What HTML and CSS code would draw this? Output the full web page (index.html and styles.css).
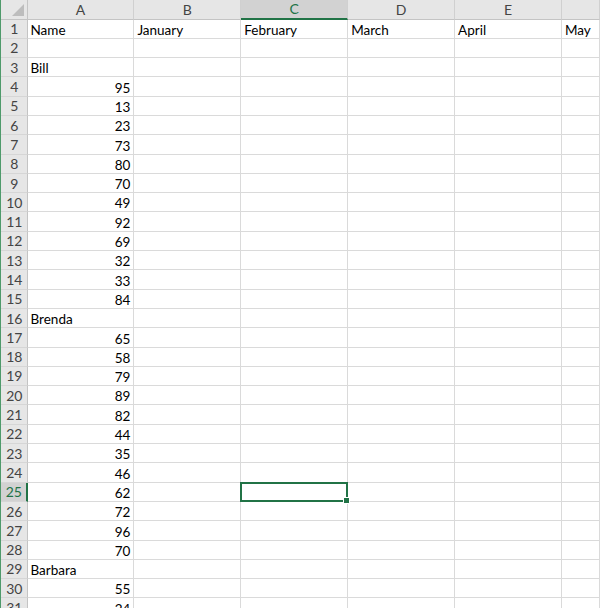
FILE: index.html
```html
<!DOCTYPE html>
<html>
<head>
<meta charset="utf-8">
<link rel="stylesheet" href="styles.css">
</head>
<body>
<div class="sheet">
  <div class="row head">
    <div class="rh corner"><svg class="tri" width="12" height="12" viewBox="0 0 12 12"><polygon points="12,0 12,12 0,12" fill="#bdbdbd"/></svg></div>
    <div class="ch">A</div><div class="ch">B</div><div class="ch sel">C</div><div class="ch">D</div><div class="ch">E</div><div class="ch"></div>
  </div>
  <div class="row"><div class="rh">1</div><div class="c">Name</div><div class="c">January</div><div class="c">February</div><div class="c">March</div><div class="c">April</div><div class="c">May</div></div>
  <div class="row"><div class="rh">2</div><div class="c"></div><div class="c"></div><div class="c"></div><div class="c"></div><div class="c"></div><div class="c"></div></div>
  <div class="row"><div class="rh">3</div><div class="c">Bill</div><div class="c"></div><div class="c"></div><div class="c"></div><div class="c"></div><div class="c"></div></div>
  <div class="row"><div class="rh">4</div><div class="c n">95</div><div class="c"></div><div class="c"></div><div class="c"></div><div class="c"></div><div class="c"></div></div>
  <div class="row"><div class="rh">5</div><div class="c n">13</div><div class="c"></div><div class="c"></div><div class="c"></div><div class="c"></div><div class="c"></div></div>
  <div class="row"><div class="rh">6</div><div class="c n">23</div><div class="c"></div><div class="c"></div><div class="c"></div><div class="c"></div><div class="c"></div></div>
  <div class="row"><div class="rh">7</div><div class="c n">73</div><div class="c"></div><div class="c"></div><div class="c"></div><div class="c"></div><div class="c"></div></div>
  <div class="row"><div class="rh">8</div><div class="c n">80</div><div class="c"></div><div class="c"></div><div class="c"></div><div class="c"></div><div class="c"></div></div>
  <div class="row"><div class="rh">9</div><div class="c n">70</div><div class="c"></div><div class="c"></div><div class="c"></div><div class="c"></div><div class="c"></div></div>
  <div class="row"><div class="rh">10</div><div class="c n">49</div><div class="c"></div><div class="c"></div><div class="c"></div><div class="c"></div><div class="c"></div></div>
  <div class="row"><div class="rh">11</div><div class="c n">92</div><div class="c"></div><div class="c"></div><div class="c"></div><div class="c"></div><div class="c"></div></div>
  <div class="row"><div class="rh">12</div><div class="c n">69</div><div class="c"></div><div class="c"></div><div class="c"></div><div class="c"></div><div class="c"></div></div>
  <div class="row"><div class="rh">13</div><div class="c n">32</div><div class="c"></div><div class="c"></div><div class="c"></div><div class="c"></div><div class="c"></div></div>
  <div class="row"><div class="rh">14</div><div class="c n">33</div><div class="c"></div><div class="c"></div><div class="c"></div><div class="c"></div><div class="c"></div></div>
  <div class="row"><div class="rh">15</div><div class="c n">84</div><div class="c"></div><div class="c"></div><div class="c"></div><div class="c"></div><div class="c"></div></div>
  <div class="row"><div class="rh">16</div><div class="c">Brenda</div><div class="c"></div><div class="c"></div><div class="c"></div><div class="c"></div><div class="c"></div></div>
  <div class="row"><div class="rh">17</div><div class="c n">65</div><div class="c"></div><div class="c"></div><div class="c"></div><div class="c"></div><div class="c"></div></div>
  <div class="row"><div class="rh">18</div><div class="c n">58</div><div class="c"></div><div class="c"></div><div class="c"></div><div class="c"></div><div class="c"></div></div>
  <div class="row"><div class="rh">19</div><div class="c n">79</div><div class="c"></div><div class="c"></div><div class="c"></div><div class="c"></div><div class="c"></div></div>
  <div class="row"><div class="rh">20</div><div class="c n">89</div><div class="c"></div><div class="c"></div><div class="c"></div><div class="c"></div><div class="c"></div></div>
  <div class="row"><div class="rh">21</div><div class="c n">82</div><div class="c"></div><div class="c"></div><div class="c"></div><div class="c"></div><div class="c"></div></div>
  <div class="row"><div class="rh">22</div><div class="c n">44</div><div class="c"></div><div class="c"></div><div class="c"></div><div class="c"></div><div class="c"></div></div>
  <div class="row"><div class="rh">23</div><div class="c n">35</div><div class="c"></div><div class="c"></div><div class="c"></div><div class="c"></div><div class="c"></div></div>
  <div class="row"><div class="rh">24</div><div class="c n">46</div><div class="c"></div><div class="c"></div><div class="c"></div><div class="c"></div><div class="c"></div></div>
  <div class="row"><div class="rh sel">25</div><div class="c n">62</div><div class="c"></div><div class="c active"><span class="cursor"></span><span class="handle"></span></div><div class="c"></div><div class="c"></div><div class="c"></div></div>
  <div class="row"><div class="rh">26</div><div class="c n">72</div><div class="c"></div><div class="c"></div><div class="c"></div><div class="c"></div><div class="c"></div></div>
  <div class="row"><div class="rh">27</div><div class="c n">96</div><div class="c"></div><div class="c"></div><div class="c"></div><div class="c"></div><div class="c"></div></div>
  <div class="row"><div class="rh">28</div><div class="c n">70</div><div class="c"></div><div class="c"></div><div class="c"></div><div class="c"></div><div class="c"></div></div>
  <div class="row"><div class="rh">29</div><div class="c">Barbara</div><div class="c"></div><div class="c"></div><div class="c"></div><div class="c"></div><div class="c"></div></div>
  <div class="row"><div class="rh">30</div><div class="c n">55</div><div class="c"></div><div class="c"></div><div class="c"></div><div class="c"></div><div class="c"></div></div>
  <div class="row"><div class="rh">31</div><div class="c n">24</div><div class="c"></div><div class="c"></div><div class="c"></div><div class="c"></div><div class="c"></div></div>
</div>
</body>
</html>
```

FILE: styles.css
```css
html, body {
  margin: 0;
  padding: 0;
  background: #ffffff;
  overflow: hidden;
}
.sheet {
  width: 600px;
  height: 608px;
  overflow: hidden;
  border-left: 1px solid #4f9a6b;
  box-sizing: border-box;
  font-family: Lato, "Liberation Sans", sans-serif;
  font-size: 13.5px;
  color: #000;
}
.row {
  display: grid;
  grid-template-columns: 26.5px repeat(5, 106.9px) 1fr;
  height: 19.3px;
}
.row.head {
  height: 19.5px;
}
.rh {
  background: #e6e6e6;
  border-right: 1px solid #c4c4c4;
  border-bottom: 1px solid #d6d6d6;
  color: #444;
  font-size: 14px;
  display: flex;
  align-items: center;
  justify-content: center;
  padding-left: 1px;
  padding-top: 1px;
  box-sizing: border-box;
  line-height: 1;
}
.rh.sel {
  background: #d2d2d2;
  color: #217346;
  border-right: 2px solid #217346;
}
.corner {
  position: relative;
  border-bottom: 1px solid #c4c4c4;
}
.tri {
  position: absolute;
  right: 3px;
  bottom: 3px;
}
.ch {
  background: #e6e6e6;
  border-right: 1px solid #d0d0d0;
  border-bottom: 1px solid #c4c4c4;
  color: #444;
  font-size: 14px;
  display: flex;
  align-items: center;
  justify-content: center;
  padding-top: 1px;
  box-sizing: border-box;
  line-height: 1;
}
.ch.sel {
  background: #d2d2d2;
  color: #217346;
  border-bottom: 2px solid #217346;
}
.c {
  border-right: 1px solid #dadada;
  border-bottom: 1px solid #dadada;
  box-sizing: border-box;
  display: flex;
  align-items: flex-end;
  padding: 0 3px 0 3px;
  line-height: 16px;
  white-space: nowrap;
  overflow: hidden;
}
.c.n {
  justify-content: flex-end;
}
.c.active {
  position: relative;
  overflow: visible;
}
.cursor {
  position: absolute;
  left: -1px;
  top: -1px;
  right: -1px;
  bottom: -1px;
  border: 2px solid #217346;
}
.handle {
  position: absolute;
  right: -3px;
  bottom: -3px;
  width: 5px;
  height: 5px;
  background: #217346;
  border: 1px solid #fff;
  box-sizing: content-box;
}
```
